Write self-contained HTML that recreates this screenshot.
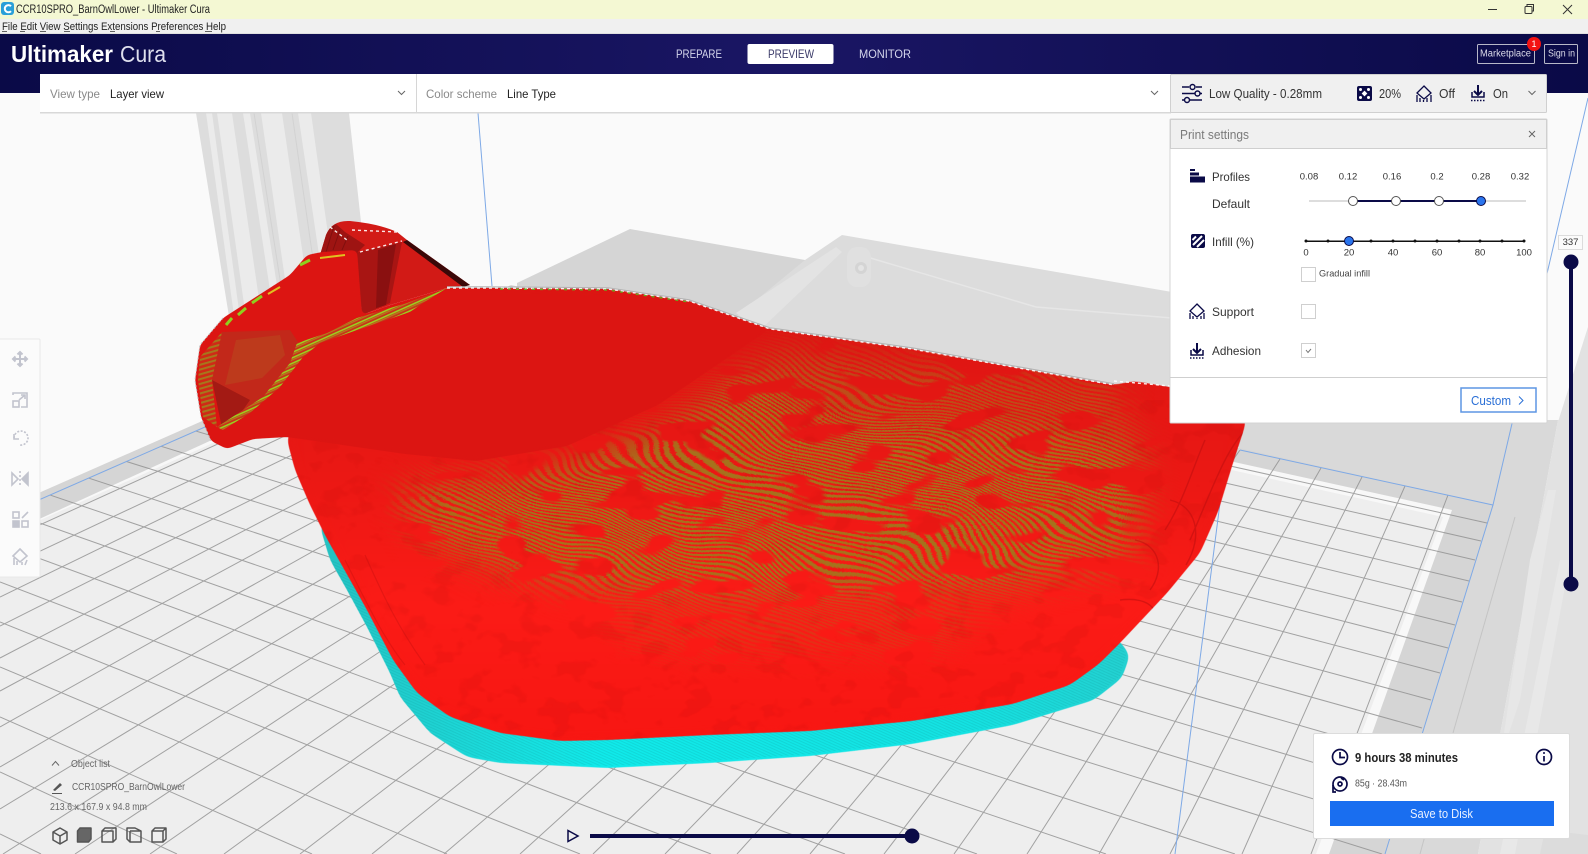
<!DOCTYPE html>
<html>
<head>
<meta charset="utf-8">
<title>Ultimaker Cura</title>
<style>
html,body{margin:0;padding:0;width:1588px;height:854px;overflow:hidden;background:#fafafa}
svg{position:absolute;left:0;top:0;display:block;overflow:hidden}
text{font-family:"Liberation Sans",sans-serif;dominant-baseline:central}
</style>
</head>
<body>
<svg width="1588" height="854" viewBox="0 0 1588 854" xmlns="http://www.w3.org/2000/svg">
<defs>
<linearGradient id="hdr" x1="0" x2="1" y1="0" y2="0"><stop offset="0" stop-color="#0a0a47"/><stop offset=".5" stop-color="#1a1664"/><stop offset="1" stop-color="#0a0a47"/></linearGradient>
<linearGradient id="cy" x1="320" x2="1130" y1="0" y2="0" gradientUnits="userSpaceOnUse"><stop offset="0" stop-color="#26c0c0"/><stop offset=".2" stop-color="#1bdada"/><stop offset=".35" stop-color="#10eaea"/><stop offset=".8" stop-color="#14e2e2"/><stop offset="1" stop-color="#24d0d0"/></linearGradient>
<linearGradient id="red" x1="0" x2="0" y1="280" y2="745" gradientUnits="userSpaceOnUse"><stop offset="0" stop-color="#d81512"/><stop offset=".45" stop-color="#ec1814"/><stop offset=".7" stop-color="#fb1b16"/><stop offset="1" stop-color="#f71612"/></linearGradient>
<pattern id="ln" width="6" height="4.2" patternUnits="userSpaceOnUse" patternTransform="rotate(20)"><rect width="6" height="2.3" fill="#a5721c"/></pattern>
<pattern id="cyl" width="4" height="2.6" patternUnits="userSpaceOnUse" patternTransform="rotate(24)"><rect width="4" height="1" fill="#0e9a9a" opacity=".22"/></pattern>
<pattern id="band" width="5" height="5" patternUnits="userSpaceOnUse" patternTransform="rotate(-24)"><rect width="5" height="5" fill="#c8321a"/><rect width="5" height="1.600" fill="#9ad01e"/><rect y="2.200" width="5" height="1" fill="#b08a1c"/></pattern>
<pattern id="band2" width="5" height="4.600" patternUnits="userSpaceOnUse" patternTransform="rotate(-16)"><rect width="5" height="4.600" fill="#cf2a16"/><rect width="5" height="2" fill="#a5781c"/></pattern>
<filter id="wavy" filterUnits="userSpaceOnUse" x="250" y="300" width="1020" height="460" color-interpolation-filters="sRGB">
<feTurbulence type="fractalNoise" baseFrequency="0.007 0.011" numOctaves="2" seed="4" result="n"/>
<feDisplacementMap in="SourceGraphic" in2="n" scale="60" xChannelSelector="R" yChannelSelector="G" result="d"/>
<feTurbulence type="fractalNoise" baseFrequency="0.018 0.045" numOctaves="2" seed="9"/>
<feColorMatrix type="matrix" values="0 0 0 0 0  0 0 0 0 0  0 0 0 0 0  12 0 0 0 -4.300" result="hole"/>
<feComposite in="d" in2="hole" operator="in"/>
</filter>
<filter id="lump" filterUnits="userSpaceOnUse" x="280" y="400" width="980" height="350" color-interpolation-filters="sRGB">
<feTurbulence type="fractalNoise" baseFrequency="0.035 0.05" numOctaves="3" seed="21"/>
<feColorMatrix type="matrix" values="0 0 0 0 0.68  0 0 0 0 0.04  0 0 0 0 0.04  9 0 0 0 -5"/>
</filter>
<filter id="goo" filterUnits="userSpaceOnUse" x="0" y="150" width="1300" height="660" color-interpolation-filters="sRGB"><feGaussianBlur stdDeviation="5"/><feComponentTransfer><feFuncA type="linear" slope="12" intercept="-5.500"/></feComponentTransfer></filter>
<filter id="goo2" filterUnits="userSpaceOnUse" x="100" y="150" width="800" height="400" color-interpolation-filters="sRGB"><feGaussianBlur stdDeviation="3"/><feComponentTransfer><feFuncA type="linear" slope="12" intercept="-5.500"/></feComponentTransfer></filter>
<filter id="b20" filterUnits="userSpaceOnUse" x="0" y="200" width="1400" height="654"><feGaussianBlur stdDeviation="16"/></filter>
<mask id="mm" maskUnits="userSpaceOnUse" x="0" y="0" width="1588" height="854">
<rect width="1588" height="854" fill="#000"/>
<polygon filter="url(#b20)" fill="#fff" points="395,490 470,480 560,468 665,428 750,370 900,395 1130,430 1145,480 1130,560 1000,590 800,605 640,600 500,570 425,540"/>
<polygon filter="url(#b20)" fill="#999" points="760,350 1120,385 1120,430 800,420"/>
<polygon filter="url(#b20)" fill="#555" points="600,610 1000,600 940,650 640,650"/>
</mask>
<clipPath id="bodyc"><path d="M287,440L295,470L310,505L326,537L340,562L367,610L393,660L417,693L450,717L500,733L560,741L608,740L709,735L810,731L912,721L1013,704L1070,685L1099,664L1120,643L1167,593L1200,553L1218,512L1233,463L1246,423L1240,400L1170,387L1134,381L1114,385L912,349L770,329L689,301L608,289L486,288L447,288L300,400Z"/></clipPath>
<clipPath id="platec"><polygon points="0,517 511,292 1493,505 1385,854 0,854"/></clipPath>
</defs>

<!-- scene background -->
<rect width="1588" height="854" fill="#fafafa"/>

<!-- left column -->
<polygon points="196,113 349,113 361,222 361,270 300,290 232,335" fill="#dddddd"/>
<g fill="#ebebeb">
<polygon points="206,113 212,113 241,325 236,330"/>
<polygon points="217,113 232,113 262,320 247,325"/>
<polygon points="243,113 250,113 280,305 273,310"/>
<polygon points="261,113 282,113 308,290 288,300"/>
<polygon points="298,113 311,113 333,270 322,275"/>
</g>
<g stroke="#d2d2d2" fill="none"><path d="M254,113L284,305M292,113L316,280"/></g>

<!-- back boxes -->
<polygon points="517,283 630,229 805,260 805,340 517,340" fill="#d5d5d5"/>
<polygon points="805,260 842,235 1172,292 1172,400 720,400 720,330" fill="#dcdcdc"/>
<polygon points="736,313 836,247 842,252 760,330" fill="#e3e3e3"/>
<polyline points="867,257 1036,307 1172,318" fill="none" stroke="#e6e6e6" stroke-width="1.500"/>
<rect x="847" y="247" width="24" height="40" rx="10" fill="#e0e0e0"/>
<circle cx="861" cy="268" r="6" fill="#d4d4d4"/><circle cx="861" cy="268" r="3" fill="#e4e4e4"/>

<!-- right bed / frame -->
<polygon points="1225,420 1558,420 1478,854 1380,854 1493,505 1240,450" fill="#d9d9d9"/>
<polygon points="1558,420 1588,420 1588,854 1478,854" fill="#e2e2e2"/>
<polygon points="1530,560 1548,490 1556,490 1520,700 1500,760" fill="#e7e7e7"/>
<polygon points="1500,854 1560,560 1570,560 1515,854" fill="#e8e8e8"/>
<polygon points="1557,425 1588,327 1588,420" fill="#e2e2e2"/>
<polygon points="1545,830 1588,835 1588,854 1540,854" fill="#dcdcdc"/>
<line x1="1515" y1="517" x2="1453" y2="733" stroke="#c4c4c4"/>
<line x1="1453" y1="733" x2="1420" y2="854" stroke="#c4c4c4"/>
<polygon points="1150,424 1200,424 1170,440 1140,440" fill="#e4e4e4"/>

<!-- plate -->
<polygon points="0,510 511,285 1493,505 1385,854 0,854" fill="#d5d5d5"/>
<polygon points="0,537 511,303 1452,510 1329,854 0,854" fill="#f8f8f8"/>
<polygon points="0,538 511,310 1443,517 1316,854 0,854" fill="#eeeeee"/>

<g clip-path="url(#platec)" stroke="#8f8f8f" stroke-width="1" fill="none" opacity=".8">
<path d="M1448,495L1311,854M1405,486L1242,854M1362,477L1170,854M1321,468L1099,854M1280,459L1027,854M1240,450L954,854M1201,442L884,854M1163,433L810,854M1125,425L737,854M1089,417L665,854M1053,410L593,854M1018,402L520,854M983,394L444,854M950,387L372,854M917,380L300,854M884,373L224,854M852,366L150,854M821,359L75,854M791,353L3,854M761,346L0,809M731,340L0,767M702,333L0,727M674,327L0,691M646,321L0,658M619,315L0,626M592,309L0,597M565,304L0,570M539,298L0,543"/>
<path d="M0,193L1487,523M0,205L1481,541M0,218L1475,560M0,232L1469,581M0,246L1462,602M0,261L1455,625M0,277L1448,648M0,293L1440,673M0,312L1431,700M0,331L1422,728M0,352L1413,758M0,373L1403,789M0,397L1392,823M0,422L1382,854M0,449L1235,854M0,478L1106,854M0,509L977,854M0,544L845,854M0,582L711,854M0,622L580,854M0,667L447,854M0,717L312,854M0,772L177,854M0,834L41,854"/>
</g>

<!-- blue build volume lines -->
<g stroke="#7ea9e6" stroke-width="1" fill="none">
<path d="M478,113L492,286"/>
<path d="M1240,450L1493,505L1588,98"/>
<path d="M1493,505L1385,854"/>
<path d="M1220,503L1175,854"/>
<path d="M0,517L205,427"/>
</g>

<!-- cyan brim -->
<g filter="url(#goo)">
<path d="M318,520L330,560L347,590L367,627L390,673L400,697L430,733L467,757L500,763L608,768L709,763L810,756L912,744L1013,725L1094,700L1122,678L1130,655L1119,640L1000,600L500,600Z" fill="url(#cy)"/>
</g>
<path d="M330,560L347,590L367,627L390,673L400,697L430,733L467,755L500,761L608,766L709,761L810,754L912,742L1013,723L1094,698L1120,676L1126,655L1119,640L1000,600L500,600Z" fill="url(#cyl)"/>

<!-- red body -->
<g filter="url(#goo)">
<path d="M287,440L295,470L310,505L326,537L340,562L367,610L393,660L417,693L450,717L500,733L560,741L608,740L709,735L810,731L912,721L1013,704L1070,685L1099,664L1120,643L1167,593L1200,553L1218,512L1233,463L1246,423L1240,400L1170,387L1134,381L1114,385L912,349L770,329L689,301L608,289L486,288L447,288L300,400Z" fill="url(#red)"/>
</g>
<g clip-path="url(#bodyc)">
<rect x="280" y="400" width="980" height="350" filter="url(#lump)" opacity=".1"/>
<g mask="url(#mm)"><rect x="250" y="300" width="1020" height="460" fill="url(#ln)" filter="url(#wavy)"/></g>
<g fill="none" stroke="#bd1010" stroke-width="1.400" opacity=".55">
<path d="M1246,430C1225,450 1212,490 1190,540"/><path d="M1205,440C1192,470 1184,500 1165,530"/><path d="M1170,500C1196,506 1204,535 1186,565"/><path d="M1120,600C1150,596 1165,612 1150,632"/><path d="M1135,540C1160,545 1165,570 1150,590"/>
</g>
<g fill="none" stroke="#bd1010" stroke-width="1.200" opacity=".35">
<path d="M345,560C370,610 385,640 405,665"/><path d="M365,555C385,600 400,630 425,665"/>
</g>
</g>

<!-- back piece and wing -->
<path d="M320,255L326,235Q332,220 350,221Q380,224 397,232L407,240L470,285L447,288L390,305L362,315L357,253Z" fill="#d21a16"/>
<path d="M320,255L326,235Q330,226 336,224L345,232L365,245L357,253Z" fill="#9e1412"/>
<g stroke="#6e0c0c" stroke-width="1" opacity=".6"><path d="M326,252L334,226M333,250L340,230M342,250L348,236"/></g>
<path d="M355,253L402,242L390,303L362,315Z" fill="#a81513"/>
<path d="M378,250L396,244L386,305L376,308Z" fill="#8a1010"/>
<path d="M407,240L470,285L463,287L403,242Z" fill="#3a0808"/>

<g filter="url(#goo2)">
<path d="M322,252L307,255L290,275L262,293L223,318L200,345L195,380L201,417L211,441L227,449L253,439L287,437L405,454L476,461L567,446L658,405L739,350L770,329L689,301L608,289L486,288L447,288L390,305L362,315L357,250Z" fill="#dc1512"/>
</g>
<!-- wing scoop facets -->
<path d="M222,332L290,330L300,345L280,387L250,413L223,430L212,380Z" fill="#c2281a"/>
<path d="M212,380L250,400L236,420L222,428Z" fill="#a31a14"/>
<path d="M236,340L280,335L285,355L262,378L225,385Z" fill="#bd3a1c"/>
<path d="M200,357L222,332L212,380L217,427L203,417L198,380Z" fill="url(#band2)"/>
<!-- striped crease -->
<path d="M297,343L327,333L357,318L407,303L447,288L423,303L410,312L363,328L320,343L303,357L280,387L250,413L223,430L217,427L263,397L290,363Z" fill="url(#band)"/>
<!-- top edge green patches -->
<g stroke="#8ed01e" stroke-width="3" fill="none"><path d="M226,325L232,318M238,315L246,308M252,303L262,296M300,265L310,260"/></g>
<g stroke="#e0c020" stroke-width="2" fill="none"><path d="M268,294L280,287M320,258L345,255"/></g>
<!-- ridge dots -->
<path d="M447,287L486,287L608,288L689,300L770,328L912,348L1114,384" fill="none" stroke="#b4b4b4" stroke-width="1.500"/>
<g fill="none" stroke="#fff" stroke-width="1.400" stroke-dasharray="3 3" opacity=".9">
<path d="M447,288L486,288L608,289L689,301L770,329L912,349L1114,385"/>
<path d="M330,227L347,240M352,230L397,232M360,252L402,241"/>
<path d="M1114,381L1170,386"/>
</g>
<g fill="none" stroke="#66aa20" stroke-width="1.400" stroke-dasharray="3 5"><path d="M500,289L608,290L689,302"/></g>
<path d="M223,318L200,345L195,380L201,417L211,441" fill="none" stroke="#bdbdbd" stroke-width="1" stroke-dasharray="2 2"/>

<!-- chrome -->
<rect width="1588" height="19" fill="#f4f8d3"/>
<rect y="19" width="1588" height="15" fill="#f0f0f0"/>
<rect y="33" width="1588" height="1" fill="#e0e0e0"/>
<rect y="34" width="1588" height="59" fill="url(#hdr)"/>

<!-- title bar -->
<rect x="1" y="2" width="13" height="13" rx="3" fill="#2a9fd8"/>
<path d="M11,6.200A3.600,3.600 0 1 0 11,11.200" fill="none" stroke="#fff" stroke-width="2"/>
<text x="16" y="10" font-size="11.500" fill="#222" textLength="194" lengthAdjust="spacingAndGlyphs">CCR10SPRO_BarnOwlLower - Ultimaker Cura</text>
<path d="M1488,9.500H1497" stroke="#333" stroke-width="1"/>
<rect x="1525" y="6.500" width="7" height="7" rx="1" fill="none" stroke="#333"/><path d="M1527,6V4.500H1533.500V11H1532" fill="none" stroke="#333"/>
<path d="M1563,5L1572,14M1572,5L1563,14" stroke="#333" stroke-width="1"/>
<text x="2" y="27" font-size="11" fill="#222" textLength="224" lengthAdjust="spacingAndGlyphs">File Edit View Settings Extensions Preferences Help</text>
<path d="M2,31.500H7M20,31.500H25M40,31.500H46M64,31.500H70M110,31.500H115M156,31.500H160M205,31.500H212" stroke="#333" stroke-width=".8"/>

<!-- logo & tabs -->
<text x="11" y="54" font-size="23" font-weight="700" fill="#fff" textLength="102" lengthAdjust="spacingAndGlyphs">Ultimaker</text>
<text x="120" y="54" font-size="23" fill="#dfe0ee" textLength="46" lengthAdjust="spacingAndGlyphs">Cura</text>
<text x="676" y="54" font-size="12" fill="#d4d5ec" textLength="46" lengthAdjust="spacingAndGlyphs">PREPARE</text>
<rect x="747.500" y="44" width="86" height="20" rx="2" fill="#fff"/>
<text x="768" y="54" font-size="12" fill="#3a3a68" textLength="46" lengthAdjust="spacingAndGlyphs">PREVIEW</text>
<text x="859" y="54" font-size="12" fill="#d4d5ec" textLength="52" lengthAdjust="spacingAndGlyphs">MONITOR</text>
<rect x="1477.500" y="44.500" width="57" height="19" rx="1" fill="none" stroke="#b8b8c8"/>
<text x="1480" y="54" font-size="10" fill="#dcdcea" textLength="51" lengthAdjust="spacingAndGlyphs">Marketplace</text>
<circle cx="1534" cy="44" r="7" fill="#f31212"/>
<text x="1534" y="44" font-size="9" fill="#fff" text-anchor="middle">1</text>
<rect x="1544.500" y="44.500" width="33" height="19" rx="1" fill="none" stroke="#b8b8c8"/>
<text x="1548" y="54" font-size="10" fill="#dcdcea" textLength="27" lengthAdjust="spacingAndGlyphs">Sign in</text>

<!-- top toolbar -->
<rect x="40" y="74" width="1131" height="39" fill="#fff"/>
<rect x="40" y="112" width="1131" height="1.500" fill="#d8d8d8"/>
<rect x="416" y="74" width="1" height="38" fill="#d6d6d6"/>
<text x="50" y="94" font-size="12" fill="#8a8a8a" textLength="50" lengthAdjust="spacingAndGlyphs">View type</text>
<text x="110" y="94" font-size="12" fill="#222" textLength="54" lengthAdjust="spacingAndGlyphs">Layer view</text>
<path d="M398,91L401.500,94.500L405,91" fill="none" stroke="#666"/>
<text x="426" y="94" font-size="12" fill="#8a8a8a" textLength="71" lengthAdjust="spacingAndGlyphs">Color scheme</text>
<text x="507" y="94" font-size="12" fill="#222" textLength="49" lengthAdjust="spacingAndGlyphs">Line Type</text>
<path d="M1151,91L1154.500,94.500L1158,91" fill="none" stroke="#666"/>

<rect x="1170.500" y="74.500" width="376" height="38" rx="1" fill="#f0f0f0" stroke="#d0d0d0"/>
<g stroke="#0a0a47" stroke-width="1.500" fill="none">
<path d="M1182,87H1189M1196,87H1202M1182,93.500H1195M1200,93.500H1202M1182,100H1184M1190,100H1202"/>
<circle cx="1192.500" cy="87" r="2.500"/><circle cx="1197.500" cy="93.500" r="2.500"/><circle cx="1187" cy="100" r="2.500"/>
</g>
<text x="1209" y="94" font-size="12.500" fill="#333" textLength="113" lengthAdjust="spacingAndGlyphs">Low Quality - 0.28mm</text>
<rect x="1357" y="86" width="15" height="15" rx="2" fill="#0a0a47"/>
<g fill="#fff"><circle cx="1360.500" cy="89.500" r="1.500"/><circle cx="1368.500" cy="89.500" r="1.500"/><circle cx="1360.500" cy="97.500" r="1.500"/><circle cx="1368.500" cy="97.500" r="1.500"/><rect x="1362.500" y="91.500" width="4" height="4" transform="rotate(45 1364.500 93.500)"/></g>
<text x="1379" y="94" font-size="12.500" fill="#333" textLength="22" lengthAdjust="spacingAndGlyphs">20%</text>
<g stroke="#0a0a47" stroke-width="1.300" fill="none"><path d="M1424,86L1431,93L1424,99L1417,93Z"/><path d="M1417,95V102M1420,98V102M1423.500,100V102M1427,98V102M1431,95V102"/></g>
<text x="1439" y="94" font-size="12.500" fill="#333" textLength="16" lengthAdjust="spacingAndGlyphs">Off</text>
<g stroke="#0a0a47" fill="none"><path d="M1478,85V94M1474,91L1478,95L1482,91" stroke-width="2"/><path d="M1472,92V97H1484V92" stroke-width="1.500"/><path d="M1471,100.500H1486" stroke-dasharray="1.500 1.500" stroke-width="1.500"/></g>
<text x="1493" y="94" font-size="12.500" fill="#333" textLength="15" lengthAdjust="spacingAndGlyphs">On</text>
<path d="M1528.500,91L1532,94.500L1535.500,91" fill="none" stroke="#666"/>

<!-- print settings panel -->
<rect x="1170" y="119" width="377" height="304" rx="1" fill="#fff" stroke="#d4d4d4"/>
<rect x="1170.500" y="119.500" width="376" height="29" fill="#f0f0f0" stroke="#cfcfcf"/>
<text x="1180" y="135" font-size="12.500" fill="#7a7a7a" textLength="69" lengthAdjust="spacingAndGlyphs">Print settings</text>
<path d="M1529,131L1535,137M1535,131L1529,137" stroke="#666"/>

<g fill="#0a0a47"><rect x="1190" y="169" width="5" height="2"/><rect x="1190" y="172.500" width="9" height="3"/><rect x="1190" y="176.500" width="15" height="6"/></g>
<text x="1212" y="177" font-size="12" fill="#333" textLength="38" lengthAdjust="spacingAndGlyphs">Profiles</text>
<text x="1212" y="204" font-size="12" fill="#333" textLength="38" lengthAdjust="spacingAndGlyphs">Default</text>
<g font-size="9.500" fill="#333" text-anchor="middle">
<text x="1309" y="177">0.08</text><text x="1348" y="177">0.12</text><text x="1392" y="177">0.16</text><text x="1437" y="177">0.2</text><text x="1481" y="177">0.28</text><text x="1520" y="177">0.32</text>
</g>
<rect x="1309" y="200" width="217" height="2" fill="#dddddd"/>
<rect x="1353" y="200" width="128" height="2" fill="#0a0a47"/>
<g stroke="#555" fill="#fff"><circle cx="1353" cy="201" r="4.500"/><circle cx="1396" cy="201" r="4.500"/><circle cx="1439" cy="201" r="4.500"/></g>
<circle cx="1481" cy="201" r="4.500" fill="#2a75ee" stroke="#0a0a47"/>

<rect x="1191" y="234" width="14" height="14" rx="2" fill="#0a0a47"/>
<path d="M1193,245L1202,236M1197,247L1204,240M1192.500,240L1196,236.500" stroke="#fff" stroke-width="2" fill="none"/>
<text x="1212" y="242" font-size="12" fill="#333" textLength="42" lengthAdjust="spacingAndGlyphs">Infill (%)</text>
<rect x="1306" y="240.500" width="218" height="1.500" fill="#111"/>
<g fill="#111"><circle cx="1306" cy="241" r="1.500"/><circle cx="1328" cy="241" r="1.500"/><circle cx="1371" cy="241" r="1.500"/><circle cx="1393" cy="241" r="1.500"/><circle cx="1415" cy="241" r="1.500"/><circle cx="1437" cy="241" r="1.500"/><circle cx="1459" cy="241" r="1.500"/><circle cx="1480" cy="241" r="1.500"/><circle cx="1502" cy="241" r="1.500"/><circle cx="1524" cy="241" r="1.500"/></g>
<circle cx="1349" cy="241" r="4.500" fill="#2a75ee" stroke="#0a0a47"/>
<g font-size="9.500" fill="#333" text-anchor="middle">
<text x="1306" y="253">0</text><text x="1349" y="253">20</text><text x="1393" y="253">40</text><text x="1437" y="253">60</text><text x="1480" y="253">80</text><text x="1524" y="253">100</text>
</g>
<rect x="1301.500" y="267.500" width="14" height="14" fill="#fff" stroke="#cfcfcf"/>
<text x="1319" y="274" font-size="9.500" fill="#444" textLength="51" lengthAdjust="spacingAndGlyphs">Gradual infill</text>

<g stroke="#0a0a47" stroke-width="1.300" fill="none"><path d="M1197,304L1204,311L1197,317L1190,311Z"/><path d="M1190,313V319M1193,316V319M1197,318V319M1201,316V319M1204,313V319"/></g>
<text x="1212" y="312" font-size="12" fill="#333" textLength="42" lengthAdjust="spacingAndGlyphs">Support</text>
<rect x="1301.500" y="304.500" width="14" height="14" fill="#fff" stroke="#cfcfcf"/>

<g stroke="#0a0a47" fill="none"><path d="M1197,343V352M1193,349L1197,353L1201,349" stroke-width="2"/><path d="M1191,350V355H1203V350" stroke-width="1.500"/><path d="M1190,358H1205" stroke-dasharray="1.500 1.500" stroke-width="1.500"/></g>
<text x="1212" y="351" font-size="12" fill="#333" textLength="49" lengthAdjust="spacingAndGlyphs">Adhesion</text>
<rect x="1301.500" y="343.500" width="14" height="14" fill="#fff" stroke="#cfcfcf"/>
<path d="M1306,350L1308,352.500L1311,349" fill="none" stroke="#777"/>

<rect x="1170" y="377" width="377" height="1" fill="#cfcfcf"/>
<rect x="1461" y="388" width="75" height="24" fill="#fff" stroke="#5d96e4" stroke-width="1.500"/>
<text x="1471" y="401" font-size="12.500" fill="#2a6fd6" textLength="40" lengthAdjust="spacingAndGlyphs">Custom</text>
<path d="M1519,396.500L1523,400.500L1519,404.500" fill="none" stroke="#2a6fd6"/>

<!-- layer slider -->
<rect x="1569" y="262" width="4" height="322" fill="#0a0a47"/>
<circle cx="1571" cy="262" r="7.500" fill="#0a0a47"/>
<circle cx="1571" cy="584" r="7.500" fill="#0a0a47"/>
<rect x="1558.500" y="235.500" width="24" height="14" fill="#fbfbfb" stroke="#dcdcdc"/>
<text x="1570.500" y="242.500" font-size="9.500" fill="#333" text-anchor="middle">337</text>

<!-- left tools -->
<rect x="-1" y="339" width="41" height="238" rx="1" fill="#fbfbfb" stroke="#e8e8e8"/>
<g stroke="#c2c4ce" stroke-width="1.600" fill="none">
<path d="M20,352V366M13,359H27M17.500,354.500L20,352L22.500,354.500M17.500,363.500L20,366L22.500,363.500M15.500,356.500L13,359L15.500,361.500M24.500,356.500L27,359L24.500,361.500" stroke-width="2"/>
<path d="M13,395V393H27V407H21"/><rect x="13" y="401" width="6" height="6"/><path d="M19,400L25,395M21,395H25V399"/>
<path d="M14,438A7,7 0 1 1 20,445" stroke-dasharray="2 1.500"/><path d="M14,434V439H19"/>
<path d="M20,471V487" stroke-dasharray="2 2"/><path d="M12,473L18,479L12,485Z"/><path d="M28,473L22,479L28,485Z" fill="#c2c4ce"/>
<rect x="13" y="512" width="6" height="6"/><rect x="13" y="521" width="6" height="6" fill="#c2c4ce"/><rect x="22" y="521" width="6" height="6"/><path d="M22,518L28,512"/>
<path d="M20,549L27,556L20,562L13,556Z"/><path d="M14,558V565M17,561V565M22,562V565M27,560L25,565"/>
</g>

<!-- bottom left object info -->
<path d="M52,765.500L55.500,761.500L59,765.500" fill="none" stroke="#666"/>
<text x="71" y="764" font-size="10.500" fill="#666" textLength="39" lengthAdjust="spacingAndGlyphs">Object list</text>
<path d="M53,790L60,783L62,785L55,791Z" fill="#555"/><path d="M52,793.500H62" stroke="#555"/>
<text x="72" y="787" font-size="10.500" fill="#666" textLength="113" lengthAdjust="spacingAndGlyphs">CCR10SPRO_BarnOwlLower</text>
<text x="50" y="807" font-size="10.500" fill="#666" textLength="97" lengthAdjust="spacingAndGlyphs">213.6 x 167.9 x 94.8 mm</text>
<g stroke="#555" stroke-width="1.500" fill="none" stroke-linejoin="round">
<path d="M60,828L67,832V840L60,844L53,840V832ZM53,832L60,836L67,832M60,836V844"/>
<path d="M77.500,831L80,828H91V839L88.500,842H77.500Z" fill="#666"/>
<path d="M102,831H113V842H102ZM102,831L105,828H116V839L113,842"/>
<path d="M127,828H135L141,831V842H130L127,839ZM130,831H141M130,831V842"/>
<path d="M152,831H163V842H152ZM152,831L155,828H166V839L163,842M163,831L166,828"/>
</g>

<!-- bottom slider -->
<path d="M568,830.500L578,836L568,841.500Z" fill="none" stroke="#0a0a47" stroke-width="1.500"/>
<rect x="590" y="834" width="322" height="4" fill="#0a0a47"/>
<circle cx="912" cy="836" r="7.500" fill="#0a0a47"/>

<!-- print info -->
<rect x="1313.500" y="733.500" width="256" height="105" rx="1.500" fill="#fff" stroke="#dcdcdc"/>
<g stroke="#0a0a47" stroke-width="1.700" fill="none">
<circle cx="1340" cy="757" r="7.500"/><path d="M1340,752V757.500H1345"/>
<circle cx="1544" cy="757" r="7.500"/><path d="M1544,756V761.500"/>
<circle cx="1340" cy="784" r="7"/><circle cx="1340" cy="784" r="2"/><path d="M1333,785V792H1336M1341,778L1344,780"/>
</g>
<circle cx="1544" cy="753" r="1" fill="#0a0a47"/>
<text x="1355" y="758" font-size="12.500" font-weight="700" fill="#222" textLength="103" lengthAdjust="spacingAndGlyphs">9 hours 38 minutes</text>
<text x="1355" y="784" font-size="10" fill="#555" textLength="52" lengthAdjust="spacingAndGlyphs">85g · 28.43m</text>
<rect x="1330" y="801" width="224" height="25" fill="#196ef0"/>
<text x="1410" y="814" font-size="12.500" fill="#e8f0ff" textLength="63" lengthAdjust="spacingAndGlyphs">Save to Disk</text>
</svg>
</body>
</html>
